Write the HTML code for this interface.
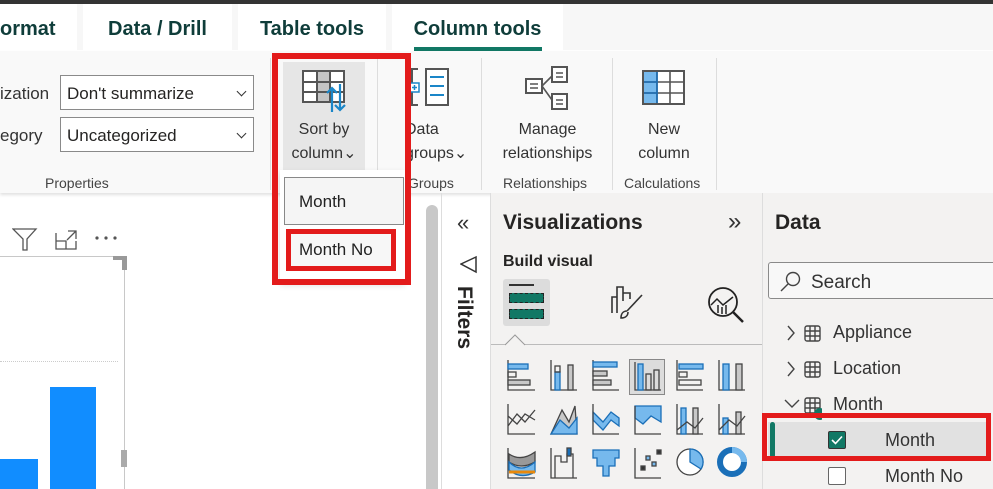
<!DOCTYPE html>
<html><head><meta charset="utf-8"><style>
*{box-sizing:border-box;margin:0;padding:0}
body{width:993px;height:489px;overflow:hidden;background:#fff;font-family:"Segoe UI","Liberation Sans",sans-serif;position:relative;color:#252423}
.a{position:absolute}
.tab{position:absolute;top:4px;height:46px;background:#fff;font-size:20px;font-weight:600;color:#0f3d3a;line-height:50px;text-align:center}
.sel{position:absolute;left:60px;width:194px;height:35px;border:1px solid #8a8a8a;background:#fff;font-size:17px;line-height:36px;padding-left:6px;color:#252423}
.sel::after{content:"";position:absolute;right:8px;top:12px;width:6px;height:6px;border-right:1.6px solid #333;border-bottom:1.6px solid #333;transform:rotate(45deg)}
.lbl{font-size:16px;color:#333;text-align:center;line-height:24px}
.grp{font-size:14px;color:#444}
.sep{position:absolute;top:58px;width:1px;height:132px;background:#ddd}
.item{position:absolute;font-size:18px;color:#333}
</style></head><body>
<div class="a" style="left:0;top:0;width:993px;height:4px;background:#333"></div>
<div class="a" style="left:0;top:4px;width:993px;height:46px;background:#f7f7f7"></div>
<div class="tab" style="left:0;width:77px;text-align:left">ormat</div>
<div class="tab" style="left:83px;width:149px">Data / Drill</div>
<div class="tab" style="left:238px;width:148px">Table tools</div>
<div class="tab" style="left:392px;width:171px">Column tools</div>
<div class="a" style="left:414px;top:47px;width:128px;height:4px;background:#117865"></div>
<!-- ribbon -->
<div class="a" style="left:0;top:51px;width:993px;height:142px;background:#f9f9f9;box-shadow:0 2px 3px rgba(0,0,0,.12)"></div>
<div class="item" style="left:0;top:84px;font-size:17px">ization</div>
<div class="item" style="left:0;top:126px;font-size:17px">egory</div>
<div class="sel" style="top:75px">Don't summarize</div>
<div class="sel" style="top:117px">Uncategorized</div>
<div class="a grp" style="left:45px;top:175px">Properties</div>
<div class="sep" style="left:270px"></div>
<div class="sep" style="left:377px"></div>
<div class="sep" style="left:481px"></div>
<div class="sep" style="left:612px"></div>
<div class="sep" style="left:716px"></div>
<!-- sort by -->
<div class="a" style="left:283px;top:62px;width:82px;height:108px;background:#e6e6e6"></div>
<svg class="a" style="left:302px;top:70px" width="46" height="44" viewBox="0 0 46 44"><rect x="1" y="1" width="41" height="31" fill="#fff" stroke="#555" stroke-width="2"/><rect x="15" y="2" width="13" height="29" fill="#c4c4c4"/><path d="M1 12H42M1 22H42M15 1V32M28 1V32" stroke="#555" stroke-width="2" fill="none"/><path d="M30 42V18M25 23l5-5 5 5" stroke="#1a86c8" stroke-width="2.2" fill="none"/><path d="M38 14V40M33 35l5 5 5-5" stroke="#1a86c8" stroke-width="2.2" fill="none"/></svg>
<div class="a lbl" style="left:283px;top:118px;width:82px">Sort by<br>column⌄</div>
<svg class="a" style="left:410px;top:67px" width="40" height="40" viewBox="0 0 40 40"><path d="M8 2H2V38H8" stroke="#555" stroke-width="2" fill="none"/><rect x="0" y="16" width="9" height="9" fill="#fff" stroke="#1a86c8" stroke-width="1.5"/><path d="M4.5 18v5M2 20.5h5" stroke="#1a86c8" stroke-width="1.5"/><rect x="16" y="2" width="22" height="36" fill="#fff" stroke="#555" stroke-width="2"/><path d="M20 10H34M20 19H34M20 28H34" stroke="#1a86c8" stroke-width="2"/></svg>
<div class="a lbl" style="left:405px;top:118px;width:60px;text-align:left">Data<br>groups⌄</div>
<div class="a grp" style="left:408px;top:175px">Groups</div>
<svg class="a" style="left:525px;top:66px" width="44" height="44" viewBox="0 0 44 44"><rect x="1" y="13" width="16" height="14" fill="#fff" stroke="#555" stroke-width="2"/><rect x="27" y="1" width="15" height="15" fill="#fff" stroke="#555" stroke-width="2"/><rect x="27" y="28" width="15" height="15" fill="#fff" stroke="#555" stroke-width="2"/><path d="M17 20L27 10M17 20L27 34M5 18h8M5 22h8M31 7h7M31 11h7M31 34h7M31 38h7" stroke="#555" stroke-width="1.6" fill="none"/></svg>
<div class="a lbl" style="left:490px;top:118px;width:115px">Manage<br>relationships</div>
<div class="a grp" style="left:503px;top:175px">Relationships</div>
<svg class="a" style="left:642px;top:70px" width="44" height="36" viewBox="0 0 44 36"><rect x="1" y="1" width="41" height="33" fill="#fff" stroke="#555" stroke-width="2"/><rect x="2" y="2" width="13" height="31" fill="#76b9ed"/><path d="M15 1V34M28 1V34M1 12H42M1 23H42" stroke="#555" stroke-width="1.6" fill="none"/><path d="M15 2V33M2 12H15M2 23H15" stroke="#1a6fb8" stroke-width="1.6"/></svg>
<div class="a lbl" style="left:620px;top:118px;width:88px">New<br>column</div>
<div class="a grp" style="left:624px;top:175px">Calculations</div>
<!-- canvas -->
<div class="a" style="left:0;top:256px;width:125px;height:1px;background:#c8c8c8"></div>
<div class="a" style="left:124px;top:256px;width:1px;height:233px;background:#c8c8c8"></div>
<div class="a" style="left:113px;top:256px;width:14px;height:4px;background:#999"></div>
<div class="a" style="left:122px;top:256px;width:5px;height:14px;background:#999"></div>
<div class="a" style="left:121px;top:450px;width:6px;height:17px;background:#aaa"></div>
<div class="a" style="left:0;top:361px;width:118px;border-top:1.5px dotted #ccc"></div>
<div class="a" style="left:0;top:459px;width:38px;height:30px;background:#118dff"></div>
<div class="a" style="left:50px;top:387px;width:46px;height:102px;background:#118dff"></div>
<svg class="a" style="left:12px;top:226px" width="110" height="26" viewBox="0 0 110 26"><path d="M1 3H24L15 13V24H11V13Z" fill="none" stroke="#555" stroke-width="1.3"/><path d="M44 7V23H64V15M44 15H54V23M56 5H64V13M64 5L55 14" fill="none" stroke="#555" stroke-width="1.3"/><circle cx="85" cy="12" r="1.6" fill="#555"/><circle cx="94" cy="12" r="1.6" fill="#555"/><circle cx="103" cy="12" r="1.6" fill="#555"/></svg>
<!-- dropdown -->
<div class="a" style="left:280px;top:170px;width:125px;height:112px;background:#fff;box-shadow:0 3px 6px rgba(0,0,0,.15)"></div>
<div class="a" style="left:284px;top:177px;width:120px;height:48px;background:#f5f5f5;border:1px solid #888"></div>
<div class="a" style="left:299px;top:192px;font-size:17px;color:#222">Month</div>
<div class="a" style="left:286px;top:229px;width:110px;height:42px;border:5px solid #e31b1b;background:#f7f7f7"></div>
<div class="a" style="left:299px;top:240px;font-size:17px;color:#222">Month No</div>
<div class="a" style="left:272px;top:53px;width:139px;height:232px;border:6px solid #e31b1b"></div>
<!-- scrollbar & filters -->
<div class="a" style="left:426px;top:205px;width:12px;height:284px;background:#c8c8c8;border-radius:6px 6px 0 0"></div>
<div class="a" style="left:441px;top:193px;width:1px;height:296px;background:#ddd"></div>
<div class="a" style="left:490px;top:193px;width:1px;height:296px;background:#ddd"></div>
<div class="a" style="left:457px;top:210px;font-size:22px;color:#333">«</div>
<svg class="a" style="left:460px;top:255px" width="18" height="20" viewBox="0 0 18 20"><path d="M1 9L16 2V17Z" fill="none" stroke="#333" stroke-width="1.5"/></svg>
<div class="a" style="left:452px;top:286px;font-size:21px;font-weight:700;color:#252423;writing-mode:vertical-rl">Filters</div>
<!-- viz pane -->
<div class="a" style="left:491px;top:193px;width:271px;height:296px;background:#f3f2f1"></div>
<div class="a" style="left:503px;top:211px;font-size:21px;font-weight:700">Visualizations</div>
<div class="a" style="left:728px;top:208px;font-size:24px;color:#333">»</div>
<div class="a" style="left:503px;top:253px;font-size:16px;font-weight:600">Build visual</div>
<div class="a" style="left:503px;top:279px;width:47px;height:47px;background:#dcdcdc;border-radius:3px"></div>
<div class="a" style="left:509px;top:284px;width:25px;height:1.5px;background:#333"></div>
<div class="a" style="left:509px;top:293px;width:35px;height:10px;background:#117865;border:1px dashed #222"></div>
<div class="a" style="left:509px;top:309px;width:35px;height:10px;background:#117865;border:1px dashed #222"></div>
<svg class="a" style="left:610px;top:285px" width="36" height="36" viewBox="0 0 36 36"><path d="M2 28V12H7V28M7 16V2H13V16M13 8H20V14" fill="none" stroke="#333" stroke-width="1.6"/><path d="M32 10L17 26M17 26c-4 0-6 3-6 7 4 0 7-2 7-6" fill="none" stroke="#333" stroke-width="1.6"/></svg>
<svg class="a" style="left:706px;top:285px" width="40" height="40" viewBox="0 0 40 40"><circle cx="17" cy="17" r="14" fill="none" stroke="#222" stroke-width="1.8"/><path d="M27 27L37 37" stroke="#222" stroke-width="2.5"/><path d="M5 20L11 14L17 20L27 12M12 20V28M16 22V29M20 20V29" fill="none" stroke="#222" stroke-width="1.5"/></svg>
<div class="a" style="left:491px;top:344px;width:271px;height:1px;background:#bbb"></div>
<svg class="a" style="left:505px;top:334px" width="30" height="12" viewBox="0 0 30 12"><path d="M0 11L10 1L20 11" fill="#f3f2f1" stroke="#999" stroke-width="1"/></svg>
<div class="a" style="left:629px;top:359px;width:36px;height:36px;background:#dcdcdc;border:1px solid #888"></div>
<svg class="a" style="left:505px;top:358px" width="250" height="124" viewBox="0 0 250 124">
<g fill="none" stroke="#444" stroke-width="1.3">
<path d="M3 2V32H30"/><rect x="3" y="6" width="20" height="5" fill="#76b9ed" stroke="#1a6fb8"/><rect x="3" y="22" width="22" height="5" fill="#c8c8c8"/><rect x="3" y="14" width="8" height="5"/>
<path d="M46 2V32H72"/><rect x="50" y="14" width="5" height="18" fill="#76b9ed" stroke="#1a6fb8"/><rect x="63" y="7" width="5" height="25" fill="#c8c8c8"/><rect x="50" y="8" width="5" height="6"/>
<path d="M88 2V32H114"/><rect x="88" y="4" width="24" height="5" fill="#76b9ed" stroke="#1a6fb8"/><rect x="88" y="13" width="14" height="5" fill="#c8c8c8"/><rect x="88" y="22" width="18" height="5" fill="#c8c8c8"/>
<path d="M130 4V32H156"/><rect x="133" y="6" width="5" height="26" fill="#76b9ed" stroke="#1a6fb8"/><rect x="141" y="16" width="5" height="16"/><rect x="149" y="12" width="5" height="20"/>
<path d="M172 2V32H198"/><rect x="174" y="6" width="24" height="5" fill="#76b9ed" stroke="#1a6fb8"/><rect x="174" y="22" width="22" height="5"/><rect x="174" y="14" width="8" height="5"/>
<path d="M214 2V32H240"/><rect x="218" y="6" width="6" height="26" fill="#76b9ed" stroke="#1a6fb8"/><rect x="231" y="6" width="6" height="26" fill="#c8c8c8"/>
<path d="M3 46V76H30M3 68L12 56L20 64L30 52M3 58L12 66L20 56L30 62"/>
<path d="M46 76L57 52L64 64L70 48L72 76Z" fill="#c8c8c8"/><path d="M46 76L55 62L64 70L72 60V76Z" fill="#76b9ed" stroke="#1a6fb8"/>
<path d="M88 54L98 64L106 54L114 60V68L106 62L98 72L88 62Z" fill="#76b9ed" stroke="#1a6fb8"/><path d="M88 46V76H114"/>
<path d="M130 48H156V64L146 58L138 66L130 60Z" fill="#76b9ed" stroke="#1a6fb8"/><path d="M130 48V76H156"/>
<path d="M172 46V76H198"/><rect x="176" y="50" width="5" height="26" fill="#76b9ed" stroke="#1a6fb8"/><rect x="188" y="50" width="5" height="26" fill="#c8c8c8"/><path d="M172 72L182 64L190 70L198 60"/>
<path d="M214 46V76H240"/><rect x="218" y="60" width="5" height="16" fill="#76b9ed" stroke="#1a6fb8"/><rect x="231" y="54" width="5" height="22" fill="#c8c8c8"/><path d="M214 72L224 62L232 68L240 58"/>
<path d="M3 90V120H30"/><path d="M4 96Q16 104 30 94V104Q16 112 4 104Z" fill="#999"/><path d="M4 104Q16 116 30 104V114Q16 122 4 112Z" fill="#76b9ed" stroke="#1a6fb8"/><path d="M4 114H30" stroke="#e8890c" stroke-width="3"/>
<path d="M46 90V120H72M50 120V98H56V104H62V96H68V120"/><rect x="62" y="90" width="4" height="8" fill="#1a6fb8"/>
<path d="M88 92H114V100H110V108H104V118H98V108H92V100H88Z" fill="#76b9ed" stroke="#1a6fb8"/>
<path d="M130 90V120H156"/><rect x="136" y="108" width="4" height="4" fill="#333"/><rect x="141" y="98" width="4" height="4" fill="#76b9ed"/><rect x="147" y="104" width="4" height="4" fill="#76b9ed"/><rect x="152" y="92" width="4" height="4" fill="#333"/>
<circle cx="185" cy="104" r="13" fill="#fff"/><path d="M185 104V91A13 13 0 0 1 196 111Z" fill="#76b9ed" stroke="#1a6fb8"/>
<circle cx="227" cy="104" r="12" fill="#fff" stroke="#1a6fb8" stroke-width="6"/><path d="M227 92A12 12 0 0 1 239 104" stroke="#76b9ed" stroke-width="6"/>
</g></svg>
<!-- data pane -->
<div class="a" style="left:762px;top:193px;width:1px;height:296px;background:#ddd"></div>
<div class="a" style="left:763px;top:193px;width:230px;height:296px;background:#f3f2f1"></div>
<div class="a" style="left:775px;top:211px;font-size:21px;font-weight:700">Data</div>
<div class="a" style="left:768px;top:262px;width:230px;height:37px;border:1px solid #8a8a8a;border-radius:3px;background:#f8f8f8"></div>
<svg class="a" style="left:779px;top:270px" width="24" height="22" viewBox="0 0 24 22"><circle cx="14" cy="9" r="6.5" fill="none" stroke="#444" stroke-width="1.4"/><path d="M9 14L2 21" stroke="#444" stroke-width="1.4"/></svg>
<div class="a" style="left:811px;top:272px;font-size:19px;color:#333">Search</div>
<svg class="a" style="left:782px;top:322px" width="40" height="100" viewBox="0 0 40 100"><g fill="none" stroke="#444" stroke-width="1.4"><path d="M6 4L12 11L6 18M6 40L12 47L6 54M3 78L10 85L17 78"/><rect x="23" y="4" width="15" height="15" rx="2"/><path d="M28 4V19M33 4V19M23 9H38M23 14H38"/><rect x="23" y="40" width="15" height="15" rx="2"/><path d="M28 40V55M33 40V55M23 45H38M23 50H38"/><rect x="23" y="76" width="15" height="15" rx="2"/><path d="M28 76V91M33 76V91M23 81H38M23 86H38"/></g><circle cx="38" cy="92" r="6" fill="#117865"/></svg>
<div class="a item" style="left:833px;top:322px">Appliance</div>
<div class="a item" style="left:833px;top:358px">Location</div>
<div class="a item" style="left:833px;top:394px">Month</div>
<div class="a" style="left:768px;top:422px;width:220px;height:36px;background:#e1e1e1"></div>
<div class="a" style="left:770px;top:422px;width:5px;height:36px;background:#117865;border-radius:3px"></div>
<div class="a" style="left:828px;top:431px;width:18px;height:18px;background:#117865;border-radius:2px;border:1px solid #333"></div>
<svg class="a" style="left:831px;top:434px" width="12" height="12" viewBox="0 0 12 12"><path d="M1 6L4.5 9.5L11 2.5" fill="none" stroke="#fff" stroke-width="1.6"/></svg>
<div class="a item" style="left:885px;top:430px">Month</div>
<div class="a" style="left:762px;top:413px;width:229px;height:48px;border:5px solid #e31b1b"></div>
<div class="a" style="left:828px;top:467px;width:18px;height:18px;border:1px solid #666;border-radius:2px;background:#fff"></div>
<div class="a item" style="left:885px;top:466px">Month No</div>
</body></html>
